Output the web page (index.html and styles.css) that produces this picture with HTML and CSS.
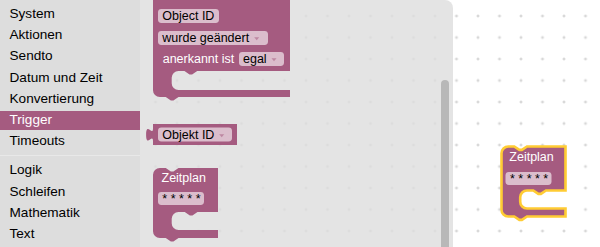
FILE: index.html
```html
<!DOCTYPE html>
<html lang="de">
<head>
<meta charset="utf-8">
<title>Blockly Trigger</title>
<link rel="stylesheet" href="styles.css">
</head>
<body>
<div class="app">
  <nav class="toolbox">
    <div class="row">System</div>
    <div class="row">Aktionen</div>
    <div class="row">Sendto</div>
    <div class="row">Datum und Zeit</div>
    <div class="row">Konvertierung</div>
    <div class="row selected">Trigger</div>
    <div class="row">Timeouts</div>
    <div class="sep"></div>
    <div class="row">Logik</div>
    <div class="row">Schleifen</div>
    <div class="row">Mathematik</div>
    <div class="row">Text</div>
  </nav>
  <main class="workspace">
    <svg class="layer" width="460" height="247" viewBox="0 0 460 247">
      <defs>
        <pattern id="grid" patternUnits="userSpaceOnUse" x="4.75" y="5.25" width="21.5" height="21.5">
          <path class="cross" d="M9.25 10.75h3M10.75 9.25v3"/>
        </pattern>
      </defs>
      <rect width="460" height="247" fill="url(#grid)"/>
      <g transform="translate(-140 0)">
        <g transform="translate(501.5 146.5)">
          <path class="block selected-block" d="M0 6.8A6.8 6.8 0 0 1 6.8 0H12.75l5.1 3.4h2.55l5.1 -3.4H64V44H44.5l-5.1 3.4h-2.55l-5.1 -3.4H25.5A6.8 6.8 0 0 0 18.7 50.8V55.2A6.8 6.8 0 0 0 25.5 62H64V70H25.5l-5.1 3.4h-2.55l-5.1 -3.4H6.8A6.8 6.8 0 0 1 0 63.2Z"/>
          <text class="label" x="7.8" y="14.8">Zeitplan</text>
          <rect class="field" x="4" y="25.5" width="46" height="13" rx="3.4"/>
          <text class="field-text" x="8.5" y="36">* * * * *</text>
        </g>
      </g>
    </svg>
    <div class="flyout">
      <svg class="layer" width="313" height="247" viewBox="0 0 313 247">
        <g transform="translate(-140 0)">
          <!-- Trigger block (top, partially scrolled out) -->
          <path class="block" d="M153 -10H290V71H197.2l-5.1 3.4h-2.55l-5.1 -3.4H178.5A6.8 6.8 0 0 0 171.7 77.8V83.2A6.8 6.8 0 0 0 178.5 90H290V97H178.5l-5.1 3.4h-2.55l-5.1 -3.4H159.8A6.8 6.8 0 0 1 153 90.2Z"/>
          <rect class="field" x="158" y="9" width="61" height="14" rx="3.4"/>
          <text class="field-text" x="162.3" y="20">Object ID</text>
          <rect class="field" x="158" y="31" width="110" height="14" rx="3.4"/>
          <text class="field-text" x="162.3" y="42">wurde geändert</text>
          <path class="arrow" d="M254.2 37.2h5l-2.5 3z"/>
          <text class="label" x="162.7" y="63.2">anerkannt ist</text>
          <rect class="field" x="239" y="52" width="45" height="14" rx="3.4"/>
          <text class="field-text" x="243" y="63">egal</text>
          <path class="arrow" d="M271.5 58.2h5l-2.5 3z"/>

          <!-- Objekt ID value block -->
          <path class="block" d="M153 124H237V145H153V141.2c0 -8.6 -6.9 6.9 -6.9 -6.45s6.9 2.15 6.9 -6.45Z"/>
          <rect class="field" x="158" y="127.5" width="74" height="14" rx="3.4"/>
          <text class="field-text" x="162.3" y="138.5">Objekt ID</text>
          <path class="arrow" d="M219.2 134.2h5l-2.5 3z"/>

          <!-- Zeitplan block -->
          <g transform="translate(153 168)">
            <path class="block" d="M0 6.8A6.8 6.8 0 0 1 6.8 0H12.75l5.1 3.4h2.55l5.1 -3.4H65V44H44.5l-5.1 3.4h-2.55l-5.1 -3.4H25.5A6.8 6.8 0 0 0 18.7 50.8V55.2A6.8 6.8 0 0 0 25.5 62H65V70H25.5l-5.1 3.4h-2.55l-5.1 -3.4H6.8A6.8 6.8 0 0 1 0 63.2Z"/>
            <text class="label" x="8.5" y="13.5">Zeitplan</text>
            <rect class="field" x="5" y="24" width="46" height="13" rx="3.4"/>
            <text class="field-text" x="9.3" y="34.5">* * * * *</text>
          </g>
        </g>
      </svg>
      <div class="scrollbar"></div>
    </div>
  </main>
</div>
</body>
</html>
```
FILE: styles.css
```css
html, body {
  margin: 0;
  padding: 0;
}
body {
  width: 600px;
  height: 247px;
  overflow: hidden;
  background: #fff;
  font-family: "Liberation Sans", Arial, sans-serif;
}
.app {
  display: flex;
  height: 247px;
}
.toolbox {
  width: 140px;
  flex: none;
  display: flex;
  flex-direction: column;
  box-sizing: border-box;
  padding-top: 5px;
  background: #dddddd;
}
.row {
  height: 18.7px;
  line-height: 18.7px;
  margin-bottom: 2.55px;
  padding-left: 9.5px;
  font-size: 13.6px;
  color: #000;
  white-space: nowrap;
}
.row.selected {
  background: #a55b80;
  color: #fff;
}
.sep {
  margin-top: 1.25px;
  margin-bottom: 5.6px;
  border-top: 1px solid #e8e8e8;
}
.workspace {
  position: relative;
  flex: 1;
  overflow: hidden;
}
.layer {
  position: absolute;
  left: 0;
  top: 0;
  display: block;
}
.cross {
  stroke: #cccccc;
  stroke-width: 1;
  fill: none;
}
.flyout {
  position: absolute;
  left: 0;
  top: 0;
  width: 313px;
  height: 100%;
  background: rgba(221, 221, 221, 0.8);
  border-top-right-radius: 8px;
}
.scrollbar {
  position: absolute;
  left: 301px;
  top: 80px;
  width: 8px;
  height: 190px;
  border-radius: 4px;
  background: #b8b8b8;
}
.block {
  fill: #a55b80;
}
.selected-block {
  stroke: #ffcc33;
  stroke-width: 2.6;
}
.field {
  fill: #fff;
  fill-opacity: 0.6;
}
.field-text {
  fill: #000;
  font-family: "Liberation Sans", Arial, sans-serif;
  font-size: 12.5px;
}
.label {
  fill: #fff;
  font-family: "Liberation Sans", Arial, sans-serif;
  font-size: 12.5px;
}
.arrow {
  fill: #a55b80;
  opacity: 0.55;
}
```
